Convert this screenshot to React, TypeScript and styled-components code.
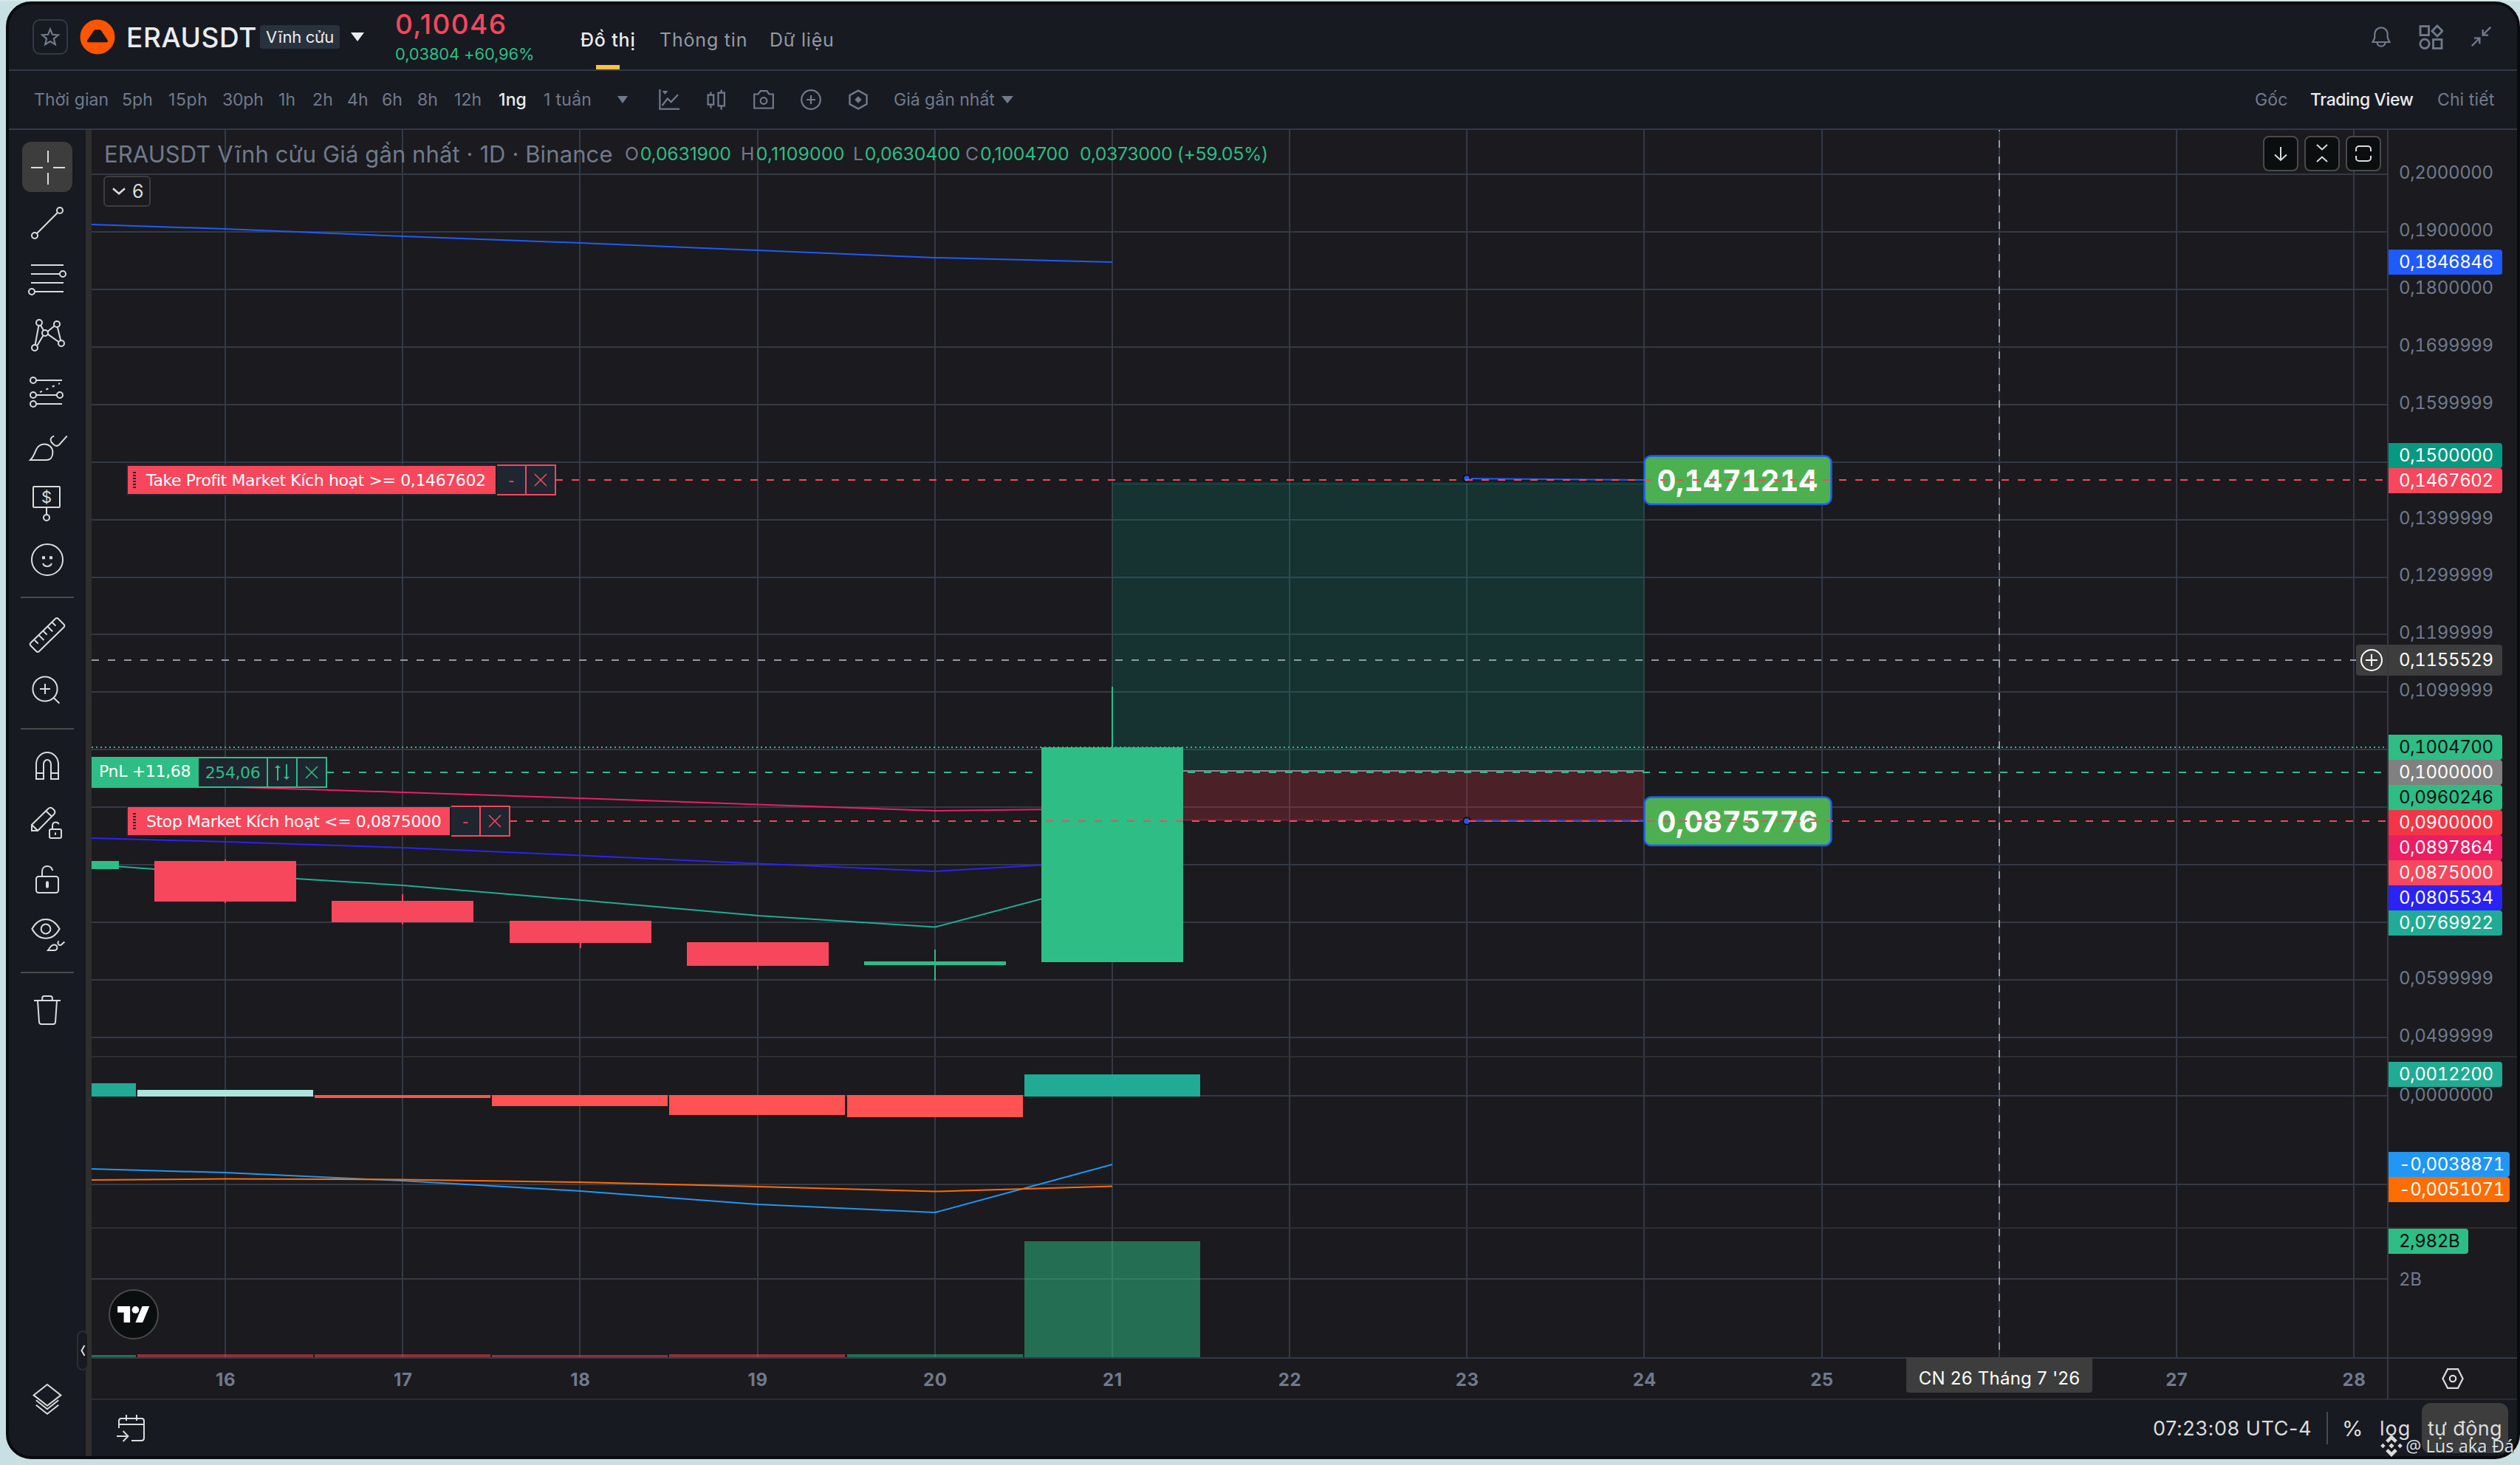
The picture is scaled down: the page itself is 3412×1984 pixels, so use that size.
import React from 'react';
import styled, { createGlobalStyle, css } from 'styled-components';

const c = {
  page: '#c8dfe3',
  frame: '#090c0f',
  panel: '#181a22',
  chart: '#1a1a1f',
  line: '#333945',
  rule: '#2e2e2e',
  grey: '#707a8c',
  soft: '#929aa5',
  text: '#eaecef',
  icon: '#dbdbdb',
  hover: '#3d3d3d',
  up: '#2ebd85',
  down: '#f6475d',
  blue: '#215afa',
  teal: '#22ab94',
  pink: '#ec1e62',
  indigo: '#2b22f5',
};

const GlobalStyle = createGlobalStyle`
  body { margin: 0; background: ${c.page}; }
  * { box-sizing: border-box; }
  svg { display: block; flex: none; }
`;

/* ---------- shell ---------- */

const Page = styled.div`
  position: relative;
  width: 3412px;
  height: 1984px;
  padding: 2px 0 0 8px;
  overflow: hidden;
  background: linear-gradient(#d4e8ea 0 2px, ${c.page} 2px);
  font-family: Inter, 'Liberation Sans', sans-serif;
  color: ${c.text};
`;

const Window = styled.div`
  display: flex;
  flex-direction: column;
  width: 3404px;
  height: 1974px;
  border: 4px solid ${c.frame};
  border-radius: 34px;
  background: ${c.panel};
  overflow: hidden;
`;

const Header = styled.header`
  display: flex;
  align-items: center;
  height: 90px;
  padding: 0 35px 0 32px;
  border-bottom: 2px solid ${c.line};
`;

const StarButton = styled.button`
  display: flex;
  align-items: center;
  justify-content: center;
  width: 48px;
  height: 48px;
  padding: 0;
  border: 2px solid ${c.line};
  border-radius: 10px;
  background: none;
`;

const Coin = styled.div`
  margin-left: 16px;
`;

const Symbol = styled.div`
  width: 181px;
  margin-left: 15px;
  font-size: 37px;
  font-weight: 500;
  letter-spacing: 0.6px;
  white-space: nowrap;
`;

const Chip = styled.div`
  display: flex;
  align-items: center;
  justify-content: center;
  width: 108px;
  height: 32px;
  border-radius: 4px;
  background: #29313d;
  font-size: 22px;
  letter-spacing: -0.3px;
  white-space: nowrap;
`;

const Caret = styled.div<{ $w: number; $h: number; $color: string; $left?: number }>`
  margin-left: ${p => p.$left ?? 0}px;
  border: solid transparent;
  border-width: ${p => p.$h}px ${p => p.$w / 2}px 0;
  border-top-color: ${p => p.$color};
`;

const PriceBlock = styled.div`
  display: flex;
  flex-direction: column;
  width: 251px;
  margin: 2px 0 0 42px;
  white-space: nowrap;
`;

const LastPrice = styled.div`
  line-height: 44px;
  font-size: 37px;
  font-weight: 500;
  letter-spacing: 1.4px;
  color: ${c.down};
`;

const Change = styled.div`
  line-height: 36px;
  font-size: 22px;
  letter-spacing: -0.17px;
  color: ${c.up};
`;

const Tab = styled.a<{ $w: number; $active?: boolean }>`
  width: ${p => p.$w}px;
  height: 100%;
  padding-top: 8px;
  line-height: 80px;
  font-size: 25px;
  font-weight: ${p => (p.$active ? 500 : 400)};
  letter-spacing: 0.8px;
  color: ${p => (p.$active ? c.text : c.soft)};
  white-space: nowrap;
  ${p =>
    p.$active &&
    css`
      background: linear-gradient(#fcc04a, #fcc04a) 21px 100% / 32px 6px no-repeat;
    `}
`;

const HeaderActions = styled.div`
  display: flex;
  align-items: center;
  gap: 38px;
  margin-left: auto;
`;

const Toolbar = styled.nav`
  display: flex;
  align-items: center;
  height: 80px;
  padding-left: 34px;
  border-bottom: 2px solid ${c.line};
  font-size: 23px;
  color: ${c.grey};
  white-space: nowrap;
`;

const Interval = styled.span<{ $w: number; $active?: boolean; $ls?: number }>`
  width: ${p => p.$w}px;
  letter-spacing: ${p => p.$ls ?? 0.1}px;
  ${p =>
    p.$active &&
    css`
      color: ${c.text};
      font-weight: 500;
    `}
`;

const ToolIcons = styled.div`
  display: flex;
  align-items: center;
  gap: 36px;
  margin: 0 34px 0 42px;
`;

const Modes = styled.div`
  display: flex;
  margin-left: auto;
`;

const Body = styled.main`
  display: flex;
  flex: 1;
`;

/* ---------- sidebar ---------- */

const Sidebar = styled.aside`
  position: relative;
  display: flex;
  flex-direction: column;
  align-items: center;
  width: 104px;
  padding: 12px 0 43px;
`;

const SideButton = styled.button<{ $active?: boolean; $last?: boolean }>`
  display: flex;
  align-items: center;
  justify-content: center;
  width: 68px;
  height: 68px;
  margin: ${p => (p.$last ? 'auto 0 0' : '4px 0')};
  padding: 0;
  border: 0;
  border-radius: 12px;
  background: ${p => (p.$active ? c.hover : 'none')};
`;

const SideRule = styled.div`
  width: 72px;
  height: 2px;
  margin: 12px 0;
  background: #4a4a4a;
`;

const Gutter = styled.div`
  width: 8px;
  background: ${c.rule};
`;

const Handle = styled.div`
  position: absolute;
  right: -4px;
  top: 1626px;
  display: flex;
  align-items: center;
  justify-content: center;
  width: 16px;
  height: 54px;
  border: 2px solid ${c.rule};
  border-radius: 8px;
  background: ${c.panel};
`;

/* ---------- chart ---------- */

const Main = styled.section`
  display: flex;
  flex-direction: column;
  width: 3284px;
`;

const ChartRow = styled.div`
  position: relative;
  display: flex;
  height: 1662px;
  background: ${c.chart};
`;

const Canvas = styled.svg`
  position: absolute;
  inset: 0;
`;

const CalloutText = styled.text`
  font: 700 40px Inter, sans-serif;
  letter-spacing: 0px;
  font-feature-settings: 'tnum';
`;

const Plot = styled.div`
  position: relative;
  display: flex;
  flex-direction: column;
  align-items: flex-start;
  width: 3108px;
  padding: 12px 0 0 16px;
`;

const Legend = styled.div`
  display: flex;
  align-items: center;
  height: 40px;
  font-size: 24.8px;
  letter-spacing: -0.2px;
  color: ${c.grey};
  white-space: nowrap;
`;

const LegendTitle = styled.div`
  width: 705px;
  margin-left: 1px;
  font-size: 31px;
  letter-spacing: 0.1px;
`;

const LegendItem = styled.div<{ $w: number; $ls?: number }>`
  width: ${p => p.$w}px;
  letter-spacing: ${p => p.$ls ?? -0.2}px;
  b {
    font-weight: 400;
    margin-left: 2px;
    color: ${c.up};
  }
`;

const Badge = styled.button`
  display: flex;
  align-items: center;
  gap: 9px;
  width: 64px;
  height: 42px;
  margin-top: 10px;
  padding: 0 0 0 10px;
  border: 2px solid ${c.hover};
  border-radius: 6px;
  background: ${c.chart};
  color: ${c.icon};
  font: 400 25px Inter, sans-serif;
`;

const PaneButtons = styled.div`
  position: absolute;
  top: 8px;
  right: 8px;
  display: flex;
  gap: 8px;
`;

const PaneButton = styled.button`
  display: flex;
  align-items: center;
  justify-content: center;
  width: 48px;
  height: 48px;
  padding: 0;
  border: 2px solid #4a4a4a;
  border-radius: 8px;
  background: #0b0e0f;
`;

const OrderTag = styled.div<{ $x: number; $y: number }>`
  position: absolute;
  left: ${p => p.$x}px;
  top: ${p => p.$y}px;
  display: flex;
  height: 42px;
  font: 400 22px 'DejaVu Sans', Verdana, sans-serif;
  white-space: nowrap;
`;

const OrderLabel = styled.div<{ $w: number }>`
  display: flex;
  align-items: center;
  width: ${p => p.$w}px;
  margin-right: 2px;
  padding-left: 7px;
  border: 2px solid #1f262f;
  border-right: 0;
  background: ${c.down};
  color: #fff;
  letter-spacing: -0.39px;
`;

const Grip = styled.div`
  width: 4px;
  height: 22px;
  margin-right: 14px;
  background: repeating-linear-gradient(#1f262f 0 2px, transparent 2px 4px);
`;

const PnlLabel = styled.div`
  width: 145px;
  padding-left: 10px;
  line-height: 40px;
  background: ${c.up};
  color: #fff;
  letter-spacing: -0.33px;
`;

const OrderCell = styled.div<{ $w: number; $color: string; $open?: boolean }>`
  display: flex;
  align-items: center;
  justify-content: center;
  width: ${p => p.$w}px;
  border: 2px solid ${p => p.$color};
  border-left-width: ${p => (p.$open ? 0 : 2)}px;
  margin-left: ${p => (p.$open ? 0 : -2)}px;
  background: #1f262f;
  color: ${p => p.$color};
  letter-spacing: -0.4px;
`;

const Logo = styled.div`
  position: absolute;
  left: 23px;
  top: 1570px;
  display: flex;
  align-items: center;
  justify-content: center;
  width: 68px;
  height: 68px;
  border: 2px solid #4a4a4a;
  border-radius: 50%;
  background: #0b0e0f;
`;

/* ---------- axes ---------- */

const PriceAxis = styled.div`
  position: relative;
  width: 176px;
  padding-top: 19px;
  border-left: 2px solid ${c.line};
  font-size: 24px;
  letter-spacing: -0.35px;
  font-feature-settings: 'tnum';
  color: ${c.grey};
`;

const Tick = styled.div<{ $gap?: number }>`
  height: 77.93px;
  margin-top: ${p => p.$gap ?? 0}px;
  padding-left: 14px;
  line-height: 78px;
`;

const TagStack = styled.div<{ $y: number }>`
  position: absolute;
  left: 0;
  top: ${p => p.$y - 176}px;
  display: flex;
  flex-direction: column;
  align-items: flex-start;
`;

const Tag = styled.div<{ $bg: string; $dark?: boolean; $w?: number }>`
  width: ${p => p.$w ?? 154}px;
  height: 34px;
  padding-left: 14px;
  border-radius: 0 4px 4px 0;
  line-height: 33px;
  background: ${p => p.$bg};
  color: ${p => (p.$dark ? '#0b0e11' : '#fff')};
`;

const CrossTag = styled.div`
  position: absolute;
  left: -44px;
  top: 697px;
  display: flex;
  align-items: center;
  width: 198px;
  height: 42px;
  padding-left: 6px;
  border-radius: 4px;
  background: linear-gradient(90deg, transparent 42px, ${c.line} 42px 44px, transparent 44px), ${c.hover};
  color: #fff;
  span { margin: -2px 0 0 22px; }
`;

const TimeAxis = styled.div`
  display: flex;
  height: 58px;
  border: solid;
  border-width: 2px 0;
  border-color: ${c.line} transparent ${c.rule};
  background: ${c.chart};
`;

const Dates = styled.div`
  position: relative;
  display: flex;
  width: 3108px;
  padding-left: 61.5px;
`;

const DateCell = styled.div`
  flex: 0 1 240.17px;
  text-align: center;
  line-height: 57px;
  font-size: 24px;
  font-weight: 700;
  letter-spacing: 0.6px;
  color: ${c.grey};
  &:last-child { flex: none; width: 240.17px; margin-right: -76px; }
`;

const DateClip = styled.div`
  display: flex;
  width: 3122.2px;
  margin-right: -76px;
`;

const CrossDate = styled.div`
  position: absolute;
  left: 2457px;
  top: -2px;
  width: 252px;
  height: 48px;
  border-radius: 0 0 4px 4px;
  background: ${c.hover};
  color: #fff;
  font-size: 24px;
  line-height: 58px;
  letter-spacing: 0.25px;
  text-align: center;
  white-space: nowrap;
`;

const AxisCorner = styled.div`
  display: flex;
  align-items: center;
  justify-content: center;
  width: 176px;
  border-left: 2px solid ${c.line};
`;

const BottomBar = styled.footer`
  display: flex;
  align-items: center;
  flex: 1;
  padding: 0 12px 0 26px;
  font-size: 27px;
  color: ${c.icon};
  white-space: nowrap;
`;

const Clock = styled.div`
  width: 235px;
  margin-left: auto;
  letter-spacing: 0.55px;
`;

const Divider = styled.div`
  width: 2px;
  height: 44px;
  margin-right: 19px;
  background: #4a4a4a;
`;

const ScaleOption = styled.div<{ $w: number; $ls?: number }>`
  width: ${p => p.$w}px;
  letter-spacing: ${p => p.$ls ?? 0}px;
`;

const Percent = styled(ScaleOption)`
  font-size: 29px;
`;

const AutoButton = styled.button`
  width: 117px;
  height: 68px;
  padding: 0;
  border: 0;
  border-radius: 12px;
  background: ${c.hover};
  color: ${c.icon};
  font: 400 27px Inter, sans-serif;
  letter-spacing: 0.4px;
  white-space: nowrap;
`;

const Watermark = styled.div`
  position: absolute;
  right: 8px;
  bottom: 10px;
  display: flex;
  align-items: center;
  gap: 4px;
  height: 32px;
  font: 400 23.5px 'Noto Sans', sans-serif;
  color: #d5dde0;
  text-shadow: 1px 1px 1px rgba(0, 0, 0, 0.5);
  white-space: nowrap;
`;

/* ---------- icons ---------- */

const SideSvg = ({ children }: { children: React.ReactNode }) => (
  <svg width="56" height="56" viewBox="0 0 28 28" fill="none" stroke={c.icon}>
    {children}
  </svg>
);

const Dots = ({ at }: { at: [number, number][] }) => (
  <>
    {at.map(([x, y]) => (
      <circle key={`${x}-${y}`} cx={x} cy={y} r="2" />
    ))}
  </>
);

const DollarText = styled.text`
  font: 400 11px Inter, sans-serif;
`;

const tools: Record<string, React.ReactNode> = {
  cross: <path d="M14.5 3v8M14.5 18v8M3 14.5h8M18 14.5h8" />,
  trend: (
    <>
      <path d="M6.9 21.1 21.1 6.9" />
      <Dots at={[[5.5, 22.5], [22.5, 5.5]]} />
    </>
  ),
  fib: (
    <>
      <path d="M3 4.5h22M3 10.5h19.5M3 16.5h22M5.5 22.5H25" />
      <Dots at={[[24.5, 10.5], [3.5, 22.5]]} />
    </>
  ),
  pattern: (
    <>
      <path d="M8.2 7.5 5.8 20.5M7 21.2l4.2-6.9M9.5 7.2l2 3.6M14.2 11.5l4.6-3.8M20.9 8.5l2.2 9M14.4 13.3l7.3 5.2" />
      <Dots at={[[8.5, 5.5], [20.5, 6.5], [12.5, 12.5], [5.5, 22.5], [23.5, 19.5]]} />
    </>
  ),
  forecast: (
    <>
      <path d="M6.5 6.5H24M6.5 16.5h14M6.5 22.5H24" />
      <path d="M9 14.6l13.5-6" strokeDasharray="1.6 3" />
      <Dots at={[[4.5, 6.5], [4.5, 16.5], [22.5, 16.5], [4.5, 22.5]]} />
    </>
  ),
  brush: (
    <path d="M2.5 22.5H13.5c2.6 0 4.2-2 4.2-5.2s-2.4-5.6-5.6-5.6c-2.9 0-4.7 1.6-5.7 4-.9 2.2-1.9 4.9-3.9 6.8ZM18.6 6.2c-2.3.8-2.9 2.5-1.8 4.2l1.5 1.6c1.3 1.2 2.6 1.2 3.8.1l5.3-5.9" />
  ),
  projection: (
    <>
      <rect x="4.5" y="2.5" width="18" height="14" rx=".6" />
      <path d="M13.5 16.5v5" />
      <Dots at={[[13.5, 23.5]]} />
      <DollarText x="13.5" y="13.4" textAnchor="middle" fill={c.icon} stroke="none">$</DollarText>
    </>
  ),
  smile: (
    <>
      <circle cx="14" cy="14" r="10.5" />
      <path d="M11 16.5c.6 1.3 1.7 2 3 2s2.4-.7 3-2" />
      <path d="M11.5 11.6v2M16.5 11.6v2" strokeWidth="2" />
    </>
  ),
  ruler: (
    <path d="M19.6 2.9a1.2 1.2 0 0 1 1.7 0l4 4a1.2 1.2 0 0 1 0 1.7L8.4 25.1a1.2 1.2 0 0 1-1.7 0l-4-4a1.2 1.2 0 0 1 0-1.7ZM5.5 17.5l2.3 2.3M8.5 14.3l3.2 3.2M11.5 11.5l2.3 2.3M14.4 8.4l3.2 3.2M17.4 5.5l2.3 2.3" />
  ),
  zoom: <path d="M12.5 4.2a8.3 8.3 0 1 0 0 16.6 8.3 8.3 0 0 0 0-16.6ZM12.5 9v7M9 12.5h7M18.2 18.4l4 3.8" />,
  magnet: (
    <path d="M6.5 22.5v-10a7.5 8 0 0 1 15 0v10h-5v-10a2.5 3 0 0 0-5 0v10ZM6.5 18.5h5M16.5 18.5h5" />
  ),
  pencilLock: (
    <>
      <path d="M3.5 19.5v-4L14.6 4.6c1-.9 2.2-.9 3.1 0l.8.8c.9.9.9 2 0 3L7.6 19.5ZM3.5 15.5l4.1 4M13.2 6.2l4 3.8" />
      <rect x="15.5" y="18.5" width="8" height="6" rx="1" />
      <path d="M17.5 18.5v-2.3c0-1.6.8-2.5 2.2-2.5 1.1 0 1.8.5 2.1 1.4M19.5 20.8v1.6" />
    </>
  ),
  lock: (
    <>
      <rect x="6.5" y="12.5" width="15" height="11" rx="1.6" />
      <path d="M10.5 12.5V9.2c0-2.2 1.4-3.7 3.5-3.7 1.9 0 3.1 1 3.6 3" />
      <path d="M14 16.6v2.8" strokeWidth="2" strokeLinecap="round" />
    </>
  ),
  eye: (
    <>
      <path d="M3.7 10C6 5.8 9.2 3.5 13 3.5s7 2.3 9.3 6.5c-2.3 4.2-5.5 6.4-9.3 6.4S6 14.2 3.7 10Z" />
      <circle cx="13" cy="10" r="3.2" />
      <path d="M14.5 24.5h4c1.3 0 2.2-.8 2.2-1.9 0-1.2-.9-1.9-2.1-1.9-2.2 0-2.7 2.2-4.1 3.8ZM21.8 18.2c-.9.8-.8 2 .2 2.6.7.4 1.3.2 1.9-.4l1.8-1.7" />
    </>
  ),
  trash: (
    <path d="M5 7.5h18M10.6 7.500V5.800c0-.8.5-1.300 1.300-1.300h4.200c.8 0 1.300.5 1.300 1.300v1.700M7.500 7.500l1 14.600c.1.9.6 1.400 1.500 1.400h8c.9 0 1.400-.5 1.500-1.400l1-14.600" />
  ),
  layers: (
    <path d="M14 4 23.2 11.200 14 18.400 4.800 11.200ZM6.400 14.600l7.600 6 7.600-6M6.400 17.900l7.600 6 7.600-6" />
  ),
};

const SideTool = ({ name, active, last }: { name: string; active?: boolean; last?: boolean }) => (
  <SideButton $active={active} $last={last}>
    <SideSvg>{tools[name]}</SideSvg>
  </SideButton>
);

const CloseGlyph = ({ color }: { color: string }) => (
  <svg width="18" height="18" viewBox="0 0 18 18" stroke={color} strokeWidth="1.6">
    <path d="M1 1 17 17M17 1 1 17" />
  </svg>
);

/* ---------- data ---------- */

const days = Array.from({ length: 13 }, (_, i) => 16 + i);
const crossDay = 26;
const dayX = (d: number) => 305 + (d - 16) * 240.17;
const rows = Array.from({ length: 16 }, (_, i) => Math.round(236 + i * 77.93));

const ticks = [
  '0,2000000', '0,1900000', '0,1800000', '0,1699999', '0,1599999', '', '0,1399999', '0,1299999',
  '0,1199999', '0,1099999', '', '', '', '', '0,0599999', '0,0499999',
];

const candles = [
  { x: 124, w: 37, top: 1166, bottom: 1177, up: true },
  { x: 209, w: 192, top: 1166, bottom: 1221, wick: [1164, 1223], up: false },
  { x: 449, w: 192, top: 1220, bottom: 1249, wick: [1211, 1252], up: false },
  { x: 690, w: 192, top: 1247, bottom: 1277, wick: [1247, 1284], up: false },
  { x: 930, w: 192, top: 1276, bottom: 1308, wick: [1276, 1313], up: false },
  { x: 1170, w: 192, top: 1302, bottom: 1307, wick: [1286, 1328], up: true },
  { x: 1410, w: 192, top: 1012, bottom: 1303, wick: [930, 1303], up: true },
];

const macd = [
  { x: 124, w: 60, top: 1467, bottom: 1485, fill: c.teal },
  { x: 186, w: 238, top: 1476, bottom: 1485, fill: '#ace5dc' },
  { x: 426, w: 238, top: 1483, bottom: 1487, fill: '#ff5252' },
  { x: 666, w: 238, top: 1483, bottom: 1498, fill: '#ff5252' },
  { x: 906, w: 238, top: 1483, bottom: 1510, fill: '#ff5252' },
  { x: 1147, w: 238, top: 1483, bottom: 1513, fill: '#ff5252' },
  { x: 1387, w: 238, top: 1455, bottom: 1485, fill: c.teal },
];

const volume = [
  { x: 124, w: 60, top: 1835, up: true },
  { x: 186, w: 238, top: 1834, up: false },
  { x: 426, w: 238, top: 1834, up: false },
  { x: 666, w: 238, top: 1835, up: false },
  { x: 906, w: 238, top: 1834, up: false },
  { x: 1147, w: 238, top: 1834, up: true },
  { x: 1387, w: 238, top: 1681, up: true },
];

const lines = [
  { color: c.blue, pts: '124,304 305,310 545,320 786,329 1026,339 1266,349 1506,355' },
  { color: c.pink, pts: '124,1058 305,1065.5 545,1073 786,1081 1026,1089.5 1266,1098 1506,1095' },
  { color: c.indigo, pts: '124,1135 305,1140 545,1148 786,1158.5 1026,1169.5 1266,1180 1506,1166' },
  { color: c.teal, pts: '124,1172 161,1173.5 305,1184 545,1199 786,1219 1026,1240 1266,1255.5 1506,1192' },
];

const Chart = () => (
  <Canvas width="3284" height="1662" viewBox="124 176 3284 1662">
    <g fill={c.line} shapeRendering="crispEdges">
      {days.map(d => (
        <rect key={d} x={Math.round(dayX(d)) - 1} y="176" width="2" height="1662" />
      ))}
      {[...rows, 1484, 1604, 1732].map(y => (
        <rect key={y} x="124" y={y - 1} width="3108" height="2" />
      ))}
    </g>
    <g fill={c.rule} shapeRendering="crispEdges">
      <rect x="124" y="1430" width="3284" height="2" />
      <rect x="124" y="1662" width="3284" height="2" />
    </g>
    <g fill="none" strokeWidth="2">
      {lines.map(l => (
        <polyline key={l.color} points={l.pts} stroke={l.color} />
      ))}
    </g>
    <rect x="1506" y="653" width="720" height="391" fill="#089981" fillOpacity=".2" />
    <rect x="1506" y="1044" width="720" height="67" fill="#f23645" fillOpacity=".235" />
    <path d="M1506 655.5h720" stroke="#089981" strokeOpacity=".35" />
    <path d="M1506 1044h720" stroke="#868a8e" strokeWidth="2" />
    <path d="M1506 1110.5h720" stroke="#7a2039" strokeWidth="2" />
    <g shapeRendering="crispEdges">
      {candles.map(k => (
        <g key={k.x} fill={k.up ? c.up : c.down}>
          {k.wick && <rect x={k.x + 95} y={k.wick[0]} width="2" height={k.wick[1] - k.wick[0]} />}
          <rect x={k.x} y={k.top} width={k.w} height={k.bottom - k.top} />
        </g>
      ))}
      {macd.map(b => (
        <rect key={b.x} x={b.x} y={b.top} width={b.w} height={b.bottom - b.top} fill={b.fill} />
      ))}
      {volume.map(b => (
        <rect key={b.x} x={b.x} y={b.top} width={b.w} height={1838 - b.top} fill={b.up ? c.up : c.down} fillOpacity=".52" />
      ))}
    </g>
    <g fill="none" strokeWidth="2">
      <polyline points="124,1583 305,1588 545,1599 786,1613 1026,1631 1266,1642 1506,1577" stroke="#2196f3" />
      <polyline points="124,1598 305,1596.5 545,1597.5 786,1601 1026,1607 1266,1613.5 1506,1606.5" stroke="#ff6d00" />
      <path d="M1986 648 2226 650M1986 1112h240" stroke={c.blue} />
    </g>
    {[648, 1112].map(y => (
      <circle key={y} cx="1986" cy={y} r="4.8" fill={c.blue} stroke="#0b0e11" strokeWidth="2" />
    ))}
    {[{ y: 617.5, t: '0,1471214' }, { y: 1079.5, t: '0,0875776' }].map(b => (
      <g key={b.t}>
        <rect x="2226.500" y={b.y} width="253" height="65.5" rx="9" fill="#4caf50" stroke={c.blue} strokeWidth="2.500" />
        <CalloutText x="2243.5" y={b.y + 47.5} fill="#fff">{b.t}</CalloutText>
      </g>
    ))}
    <g strokeWidth="2" fill="none" shapeRendering="crispEdges">
      <path d="M752 650H3232" stroke={c.down} strokeDasharray="10 12" />
      <path d="M690 1112H3232" stroke={c.down} strokeDasharray="10 12" />
      <path d="M442 1046H3232" stroke={c.up} strokeDasharray="10 12" />
      <path d="M124 1012H3232" stroke={c.up} strokeDasharray="2 4" />
      <path d="M124 894H3190" stroke="#959aa3" strokeDasharray="10 12" />
      <path d="M2707 168V1838" stroke="#959aa3" strokeDasharray="10 12" />
    </g>
  </Canvas>
);

/* ---------- app ---------- */

export default function App() {
  return (
    <Page>
      <GlobalStyle />
      <Window>
        <Header>
          <StarButton>
            <svg width="28" height="28" viewBox="0 0 28 28" fill="none" stroke={c.grey} strokeWidth="2.2" strokeLinejoin="miter">
              <path d="M14 3.5l3 7.300 7.900.6-6 5.100 1.900 7.700L14 20l-6.800 4.200 1.900-7.700-6-5.100 7.900-.6Z" />
            </svg>
          </StarButton>
          <Coin>
            <svg width="48" height="48" viewBox="0 0 48 48">
              <circle cx="24" cy="24" r="23.5" fill="#ff5500" />
              <path d="M18.500 16.200c.9-1.500 1.800-2 3.200-2h4.600c1.400 0 2.300.5 3.200 2l8.100 12c1 1.700.3 3-1.600 3H12c-1.900 0-2.600-1.300-1.600-3Z" fill="#15171c" />
            </svg>
          </Coin>
          <Symbol>ERAUSDT</Symbol>
          <Chip>Vĩnh cửu</Chip>
          <Caret $w={18} $h={12} $left={15} $color={c.text} />
          <PriceBlock>
            <LastPrice>0,10046</LastPrice>
            <Change>0,03804 +60,96%</Change>
          </PriceBlock>
          <Tab $w={107} $active>Đồ thị</Tab>
          <Tab $w={149}>Thông tin</Tab>
          <Tab $w={120}>Dữ liệu</Tab>
          <HeaderActions>
            <svg width="26" height="28" viewBox="0 0 26 28" fill="none" stroke={c.grey} strokeWidth="2.2">
              <path d="M1.600 21 4.300 15.200V10a8.700 8.700 0 0 1 17.400 0v5.200L24.400 21ZM7.500 21.500a5.500 5.200 0 0 0 11 0" />
            </svg>
            <svg width="33" height="34" viewBox="0 0 33 34" fill="none" stroke={c.grey} strokeWidth="2.8">
              <rect x="2" y="2.6" width="11.5" height="12" />
              <path d="M25 1.900 32 8.900 25 15.900 18 8.900Z" />
              <circle cx="8" cy="26.3" r="6.2" />
              <rect x="19.500" y="20.500" width="11.5" height="12" />
            </svg>
            <svg width="27" height="28" viewBox="0 0 27 28" fill="none" stroke={c.grey} strokeWidth="2.4">
              <path d="M26.200.8 16 11M15.700 4v7.600h7.400M.8 26.200 11 16M3.900 15.600h7.400v7.600" />
            </svg>
          </HeaderActions>
        </Header>

        <Toolbar>
          <Interval $w={119}>Thời gian</Interval>
          <Interval $w={63}>5ph</Interval>
          <Interval $w={73} $ls={0.6}>15ph</Interval>
          <Interval $w={76} $ls={-0.2}>30ph</Interval>
          <Interval $w={46}>1h</Interval>
          <Interval $w={47}>2h</Interval>
          <Interval $w={47}>4h</Interval>
          <Interval $w={48}>6h</Interval>
          <Interval $w={50}>8h</Interval>
          <Interval $w={60}>12h</Interval>
          <Interval $w={61} $active>1ng</Interval>
          <Interval $w={100} $ls={0.3}>1 tuần</Interval>
          <Caret $w={15} $h={10} $color={c.grey} />
          <ToolIcons>
            <svg width="28" height="28" viewBox="0 0 28 28" fill="none" stroke={c.grey} strokeWidth="2.2">
              <path d="M1.400 0v26.600H28M4.500 22l7.300-9.500 4.800 4.600L26 7.200" />
              <path d="M4.500 2h8L8.500 7Z" fill={c.grey} stroke="none" />
            </svg>
            <svg width="28" height="28" viewBox="0 0 28 28" fill="none" stroke={c.grey} strokeWidth="2.2">
              <path d="M2.600 7.600h7.600v13H2.600ZM6.400 3.500v4M6.400 20.600v5M16.500 4.600h8.400v17.800h-8.400ZM20.700.5v4M20.700 22.400v5" />
            </svg>
            <svg width="28" height="28" viewBox="0 0 28 28" fill="none" stroke={c.grey} strokeWidth="2.2">
              <path d="M1.200 6.500h5.400l3.200-4.300h8.400l3.200 4.300h5.400v19H1.200Z" />
              <circle cx="14" cy="15.5" r="4.3" />
            </svg>
            <svg width="28" height="28" viewBox="0 0 28 28" fill="none" stroke={c.grey} strokeWidth="2.2">
              <circle cx="14" cy="14" r="12.8" />
              <path d="M14 8v12M8 14h12" />
            </svg>
            <svg width="28" height="28" viewBox="0 0 28 28" fill="none" stroke={c.grey} strokeWidth="2.4">
              <path d="M14 1.600 25.500 8v12L14 26.400 2.500 20V8Z" />
              <path d="M14 9.300 18.700 14 14 18.700 9.300 14Z" fill={c.grey} stroke="none" />
            </svg>
          </ToolIcons>
          <Interval $w={146} $ls={0}>Giá gần nhất</Interval>
          <Caret $w={16} $h={10} $color={c.grey} />
          <Modes>
            <Interval $w={75}>Gốc</Interval>
            <Interval $w={172} $active $ls={-0.4}>Trading View</Interval>
            <Interval $w={108}>Chi tiết</Interval>
          </Modes>
        </Toolbar>

        <Body>
          <Sidebar>
            <SideTool name="cross" active />
            <SideTool name="trend" />
            <SideTool name="fib" />
            <SideTool name="pattern" />
            <SideTool name="forecast" />
            <SideTool name="brush" />
            <SideTool name="projection" />
            <SideTool name="smile" />
            <SideRule />
            <SideTool name="ruler" />
            <SideTool name="zoom" />
            <SideRule />
            <SideTool name="magnet" />
            <SideTool name="pencilLock" />
            <SideTool name="lock" />
            <SideTool name="eye" />
            <SideRule />
            <SideTool name="trash" />
            <SideTool name="layers" last />
            <Handle>
              <svg width="8" height="16" viewBox="0 0 8 16" fill="none" stroke={c.icon} strokeWidth="2">
                <path d="M6.500 1 2.500 8l4 7" />
              </svg>
            </Handle>
          </Sidebar>
          <Gutter />
          <Main>
            <ChartRow>
              <Chart />
              <Plot>
                <Legend>
                  <LegendTitle>ERAUSDT Vĩnh cửu Giá gần nhất · 1D · Binance</LegendTitle>
                  <LegendItem $w={157}>O<b>0,0631900</b></LegendItem>
                  <LegendItem $w={152} $ls={0.2}>H<b>0,1109000</b></LegendItem>
                  <LegendItem $w={152}>L<b>0,0630400</b></LegendItem>
                  <LegendItem $w={153}>C<b>0,1004700</b></LegendItem>
                  <LegendItem $w={260} $ls={-0.35}><b>0,0373000 (+59.05%)</b></LegendItem>
                </Legend>
                <Badge>
                  <svg width="18" height="10" viewBox="0 0 18 10" fill="none" stroke={c.icon} strokeWidth="2.6">
                    <path d="M1 1.200 9 8.200l8-7" />
                  </svg>
                  6
                </Badge>
                <PaneButtons>
                  <PaneButton>
                    <svg width="28" height="28" viewBox="0 0 28 28" fill="none" stroke={c.icon} strokeWidth="2">
                      <path d="M14 5v18M6 15.500l8 7.500 8-7.500" />
                    </svg>
                  </PaneButton>
                  <PaneButton>
                    <svg width="28" height="28" viewBox="0 0 28 28" fill="none" stroke={c.icon} strokeWidth="2">
                      <path d="M7 2l7 6.500L21 2M7 25l7-6.500 7 6.500" />
                    </svg>
                  </PaneButton>
                  <PaneButton>
                    <svg width="28" height="28" viewBox="0 0 28 28" fill="none" stroke={c.icon} strokeWidth="2">
                      <path d="M4 11V8a4 4 0 0 1 4-4h12a4 4 0 0 1 4 4v3M4 17v3a4 4 0 0 0 4 4h12a4 4 0 0 0 4-4v-3" />
                    </svg>
                  </PaneButton>
                </PaneButtons>

                <OrderTag $x={47} $y={453}>
                  <OrderLabel $w={500}><Grip />Take Profit Market Kích hoạt &gt;= 0,1467602</OrderLabel>
                  <OrderCell $w={40} $color={c.down} $open>-</OrderCell>
                  <OrderCell $w={42} $color={c.down}><CloseGlyph color={c.down} /></OrderCell>
                </OrderTag>
                <OrderTag $x={0} $y={849}>
                  <PnlLabel>PnL +11,68</PnlLabel>
                  <OrderCell $w={96} $color={c.up}>254,06</OrderCell>
                  <OrderCell $w={42} $color={c.up}>
                    <svg width="20" height="22" viewBox="0 0 20 22" stroke={c.up} fill={c.up} strokeWidth="2">
                      <path d="M4 22V3M16 0v19" />
                      <path d="M0 5 4 1l4 4ZM12 17l4 4 4-4Z" stroke="none" />
                    </svg>
                  </OrderCell>
                  <OrderCell $w={42} $color={c.up}><CloseGlyph color={c.up} /></OrderCell>
                </OrderTag>
                <OrderTag $x={47} $y={915}>
                  <OrderLabel $w={438}><Grip />Stop Market Kích hoạt &lt;= 0,0875000</OrderLabel>
                  <OrderCell $w={40} $color={c.down} $open>-</OrderCell>
                  <OrderCell $w={42} $color={c.down}><CloseGlyph color={c.down} /></OrderCell>
                </OrderTag>

                <Logo>
                  <svg width="44" height="34" viewBox="0 0 36 28" fill="#fff">
                    <path d="M14 23H7V12H0V5h14v18ZM28 23h-8l7.500-18h8L28 23Z" />
                    <circle cx="20" cy="9" r="4" />
                  </svg>
                </Logo>
              </Plot>

              <PriceAxis>
                {ticks.map((t, i) => <Tick key={i}>{t}</Tick>)}
                <Tick $gap={2}>0,0000000</Tick>
                <Tick $gap={172}>2B</Tick>
                <TagStack $y={338}><Tag $bg={c.blue}>0,1846846</Tag></TagStack>
                <TagStack $y={600}>
                  <Tag $bg="#059981">0,1500000</Tag>
                  <Tag $bg={c.down}>0,1467602</Tag>
                </TagStack>
                <CrossTag>
                  <svg width="30" height="30" viewBox="0 0 30 30" fill="none" stroke="#fff" strokeWidth="2">
                    <circle cx="15" cy="15" r="14" />
                    <path d="M15 7v16M7 15h16" />
                  </svg>
                  <span>0,1155529</span>
                </CrossTag>
                <TagStack $y={995}>
                  <Tag $bg={c.up} $dark>0,1004700</Tag>
                  <Tag $bg="#808080">0,1000000</Tag>
                  <Tag $bg={c.up} $dark>0,0960246</Tag>
                  <Tag $bg="#f43545">0,0900000</Tag>
                  <Tag $bg={c.pink}>0,0897864</Tag>
                  <Tag $bg={c.down}>0,0875000</Tag>
                  <Tag $bg={c.indigo}>0,0805534</Tag>
                  <Tag $bg={c.teal}>0,0769922</Tag>
                </TagStack>
                <TagStack $y={1438}><Tag $bg={c.teal}>0,0012200</Tag></TagStack>
                <TagStack $y={1560}>
                  <Tag $bg="#2196f3" $w={164}>-0,0038871</Tag>
                  <Tag $bg="#ff6d00" $w={164}>-0,0051071</Tag>
                </TagStack>
                <TagStack $y={1664}><Tag $bg={c.up} $dark $w={108}>2,982B</Tag></TagStack>
              </PriceAxis>
            </ChartRow>

            <TimeAxis>
              <Dates>
                <DateClip>
                  {days.map(d => <DateCell key={d}>{d === crossDay ? '' : d}</DateCell>)}
                </DateClip>
                <CrossDate>CN 26 Tháng 7 &#39;26</CrossDate>
              </Dates>
              <AxisCorner>
                <svg width="30" height="28" viewBox="0 0 30 28" fill="none" stroke={c.icon} strokeWidth="2.2">
                  <path d="M8 1.200h14L28.600 14 22 26.800H8L1.400 14Z" />
                  <circle cx="15" cy="14" r="4.2" />
                </svg>
              </AxisCorner>
            </TimeAxis>

            <BottomBar>
              <SideSvg>
                <path d="M5.500 14V9.200c0-1 .7-1.700 1.700-1.700h13.600c1 0 1.700.7 1.700 1.700v11.600c0 1-.7 1.700-1.700 1.700H14M5.500 11.500h17M10.500 5v4M17.500 5v4M4 19.500h7.500M8.300 16l3.400 3.500L8.300 23" />
              </SideSvg>
              <Clock>07:23:08 UTC-4</Clock>
              <Divider />
              <Percent $w={51}>%</Percent>
              <ScaleOption $w={57} $ls={1}>log</ScaleOption>
              <AutoButton>tự động</AutoButton>
            </BottomBar>
          </Main>
        </Body>
      </Window>
      <Watermark>
        <svg width="30" height="30" viewBox="0 0 30 30" fill={c.icon}>
          <path d="M15 0l7.800 7.800-3.200 3.200L15 6.400 10.400 11 7.200 7.800ZM15 30l-7.800-7.800 3.200-3.200 4.600 4.600 4.600-4.600 3.200 3.200ZM3.400 11.800 6.600 15l-3.200 3.200L.2 15ZM26.600 11.800l3.200 3.200-3.200 3.200-3.200-3.200ZM15 11.400l3.600 3.600-3.600 3.600-3.600-3.600Z" />
        </svg>
        <span>@ Lus aka Đá</span>
      </Watermark>
    </Page>
  );
}
